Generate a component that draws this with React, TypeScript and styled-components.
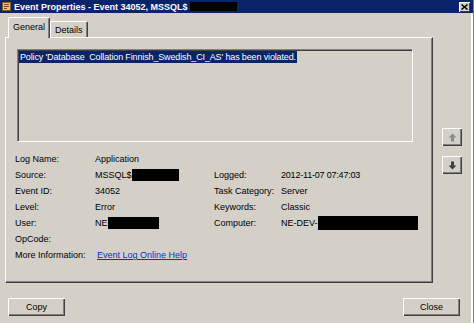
import styled, { createGlobalStyle } from "styled-components";

const GlobalStyle = createGlobalStyle`
  html, body {
    margin: 0;
    padding: 0;
  }
  body {
    width: 474px;
    height: 323px;
    overflow: hidden;
    background: #d4d0c8;
    font-family: "Liberation Sans", Arial, sans-serif;
    font-size: 9px;
    color: #000;
  }
`;

const Window = styled.div`
  width: 474px;
  height: 323px;
  background: #d4d0c8;
  display: flex;
  flex-direction: column;
  box-sizing: border-box;
  border-right: 1px solid #808080;
  box-shadow: inset -2px 0 0 #ffffff;
`;

const TitleBar = styled.div`
  height: 13px;
  background: #0a246a;
  display: flex;
  align-items: center;
  gap: 3px;
  padding: 0 3px 0 2px;
  color: #fff;
  font-weight: 700;
  font-size: 9px;
  white-space: nowrap;
`;

const TitleText = styled.span`
  display: flex;
  align-items: center;
  gap: 2px;
  flex: 1;
`;

const Redact = styled.span<{ $w: number; $h?: number }>`
  display: inline-block;
  width: ${({ $w }) => $w}px;
  height: ${({ $h }) => $h ?? 12}px;
  background: #000;
  vertical-align: middle;
`;

const CloseBox = styled.div`
  width: 11px;
  height: 10px;
  background: #d4d0c8;
  box-shadow: inset 1px 1px 0 #fff, inset -1px -1px 0 #404040;
  display: flex;
  align-items: center;
  justify-content: center;
`;

const Body = styled.div`
  display: flex;
  padding: 4px 0 0 5px;
  gap: 9px;
`;

const TabsColumn = styled.div`
  width: 428px;
  display: flex;
  flex-direction: column;
`;

const TabStrip = styled.div`
  display: flex;
  align-items: flex-end;
  height: 20px;
  padding-left: 3px;
`;

const Tab = styled.div<{ $active?: boolean }>`
  box-sizing: border-box;
  height: ${({ $active }) => ($active ? 21 : 16)}px;
  padding: ${({ $active }) => ($active ? "4px 4px 0 4px" : "3px 4px 0 4px")};
  background: #d4d0c8;
  border-top: 1px solid #fff;
  border-left: 1px solid #fff;
  border-right: 1px solid #404040;
  box-shadow: inset -1px 0 0 #808080;
  margin-bottom: ${({ $active }) => ($active ? -1 : 0)}px;
  position: relative;
  z-index: ${({ $active }) => ($active ? 1 : 0)};
  border-radius: 2px 2px 0 0;
`;

const TabPanel = styled.div`
  box-sizing: border-box;
  height: 246px;
  border-top: 1px solid #fff;
  border-left: 1px solid #fff;
  border-right: 1px solid #404040;
  border-bottom: 1px solid #404040;
  box-shadow: inset -1px -1px 0 #808080;
  padding: 11px 0 0 11px;
`;

const MessageBox = styled.div`
  box-sizing: border-box;
  width: 396px;
  height: 93px;
  border-top: 1px solid #808080;
  border-left: 1px solid #808080;
  border-right: 1px solid #fff;
  border-bottom: 1px solid #fff;
  box-shadow: inset 1px 1px 0 #404040;
  padding: 1px 0 0 1px;
`;

const Selected = styled.span`
  display: inline-block;
  background: #0a246a;
  color: #fff;
  line-height: 12px;
  padding: 0 1px;
  letter-spacing: -0.14px;
  white-space: pre;
`;

const Fields = styled.div`
  margin: 9px 0 0 -2px;
  display: grid;
  grid-template-columns: 80px 119px 67px auto;
  grid-auto-rows: 16px;
  align-items: center;
  white-space: nowrap;
`;

const Value = styled.span`
  display: flex;
  align-items: center;
`;

const DateValue = styled(Value)`
  letter-spacing: -0.2px;
`;

const Link = styled.span`
  color: #0033cc;
  text-decoration: underline;
  margin-left: 2px;
`;

const SideColumn = styled.div`
  display: flex;
  flex-direction: column;
  gap: 10px;
  padding-top: 111px;
`;

const ArrowButton = styled.div`
  width: 20px;
  height: 18px;
  box-sizing: border-box;
  background: #d4d0c8;
  box-shadow: inset 1px 1px 0 #fff, inset -1px -1px 0 #404040, inset -2px -2px 0 #808080;
  display: flex;
  align-items: center;
  justify-content: center;
`;

const Footer = styled.div`
  display: flex;
  justify-content: space-between;
  padding: 15px 13px 0 8px;
`;

const Button = styled.div`
  width: 57px;
  height: 18px;
  box-sizing: border-box;
  background: #d4d0c8;
  box-shadow: inset 1px 1px 0 #fff, inset -1px -1px 0 #404040, inset -2px -2px 0 #808080;
  display: flex;
  align-items: center;
  justify-content: center;
  padding-bottom: 1px;
`;

const AppIcon = () => (
  <svg width="9" height="9" viewBox="0 0 9 9">
    <rect x="0.5" y="0.5" width="8" height="8" fill="#e8c46a" stroke="#8a5a1a" />
    <rect x="2" y="2" width="5" height="1" fill="#b0401a" />
    <rect x="2" y="4" width="5" height="1" fill="#6a4a2a" />
    <rect x="2" y="6" width="3" height="1" fill="#6a4a2a" />
  </svg>
);

const CloseGlyph = () => (
  <svg width="7" height="6" viewBox="0 0 7 6">
    <path d="M0.5 0.5 L6.5 5.5 M6.5 0.5 L0.5 5.5" stroke="#000" strokeWidth="1.5" />
  </svg>
);

const Arrow = ({ down, color }: { down?: boolean; color: string }) => (
  <svg width="9" height="9" viewBox="0 0 9 9" style={down ? { transform: "rotate(180deg)" } : undefined}>
    <path d="M4.5 0.5 L8.5 4.5 H6 V8.5 H3 V4.5 H0.5 Z" fill={color} />
  </svg>
);

export default function App() {
  return (
    <Window>
      <GlobalStyle />
      <TitleBar>
        <AppIcon />
        <TitleText>
          Event Properties - Event 34052, MSSQL$
          <Redact $w={47} $h={9} />
        </TitleText>
        <CloseBox>
          <CloseGlyph />
        </CloseBox>
      </TitleBar>
      <Body>
        <TabsColumn>
          <TabStrip>
            <Tab $active>General</Tab>
            <Tab>Details</Tab>
          </TabStrip>
          <TabPanel>
            <MessageBox>
              <Selected>Policy 'Database  Collation Finnish_Swedish_CI_AS' has been violated.</Selected>
            </MessageBox>
            <Fields>
              <span>Log Name:</span>
              <Value>Application</Value>
              <span />
              <span />

              <span>Source:</span>
              <Value>
                MSSQL$
                <Redact $w={47} />
              </Value>
              <span>Logged:</span>
              <DateValue>2012-11-07 07:47:03</DateValue>

              <span>Event ID:</span>
              <Value>34052</Value>
              <span>Task Category:</span>
              <Value>Server</Value>

              <span>Level:</span>
              <Value>Error</Value>
              <span>Keywords:</span>
              <Value>Classic</Value>

              <span>User:</span>
              <Value>
                NE
                <Redact $w={51} />
              </Value>
              <span>Computer:</span>
              <Value>
                NE-DEV-
                <Redact $w={100} $h={14} />
              </Value>

              <span>OpCode:</span>
              <span />
              <span />
              <span />

              <span>More Information:</span>
              <Value>
                <Link>Event Log Online Help</Link>
              </Value>
              <span />
              <span />
            </Fields>
          </TabPanel>
        </TabsColumn>
        <SideColumn>
          <ArrowButton>
            <Arrow color="#8c8c8c" />
          </ArrowButton>
          <ArrowButton>
            <Arrow down color="#404040" />
          </ArrowButton>
        </SideColumn>
      </Body>
      <Footer>
        <Button>Copy</Button>
        <Button>Close</Button>
      </Footer>
    </Window>
  );
}
